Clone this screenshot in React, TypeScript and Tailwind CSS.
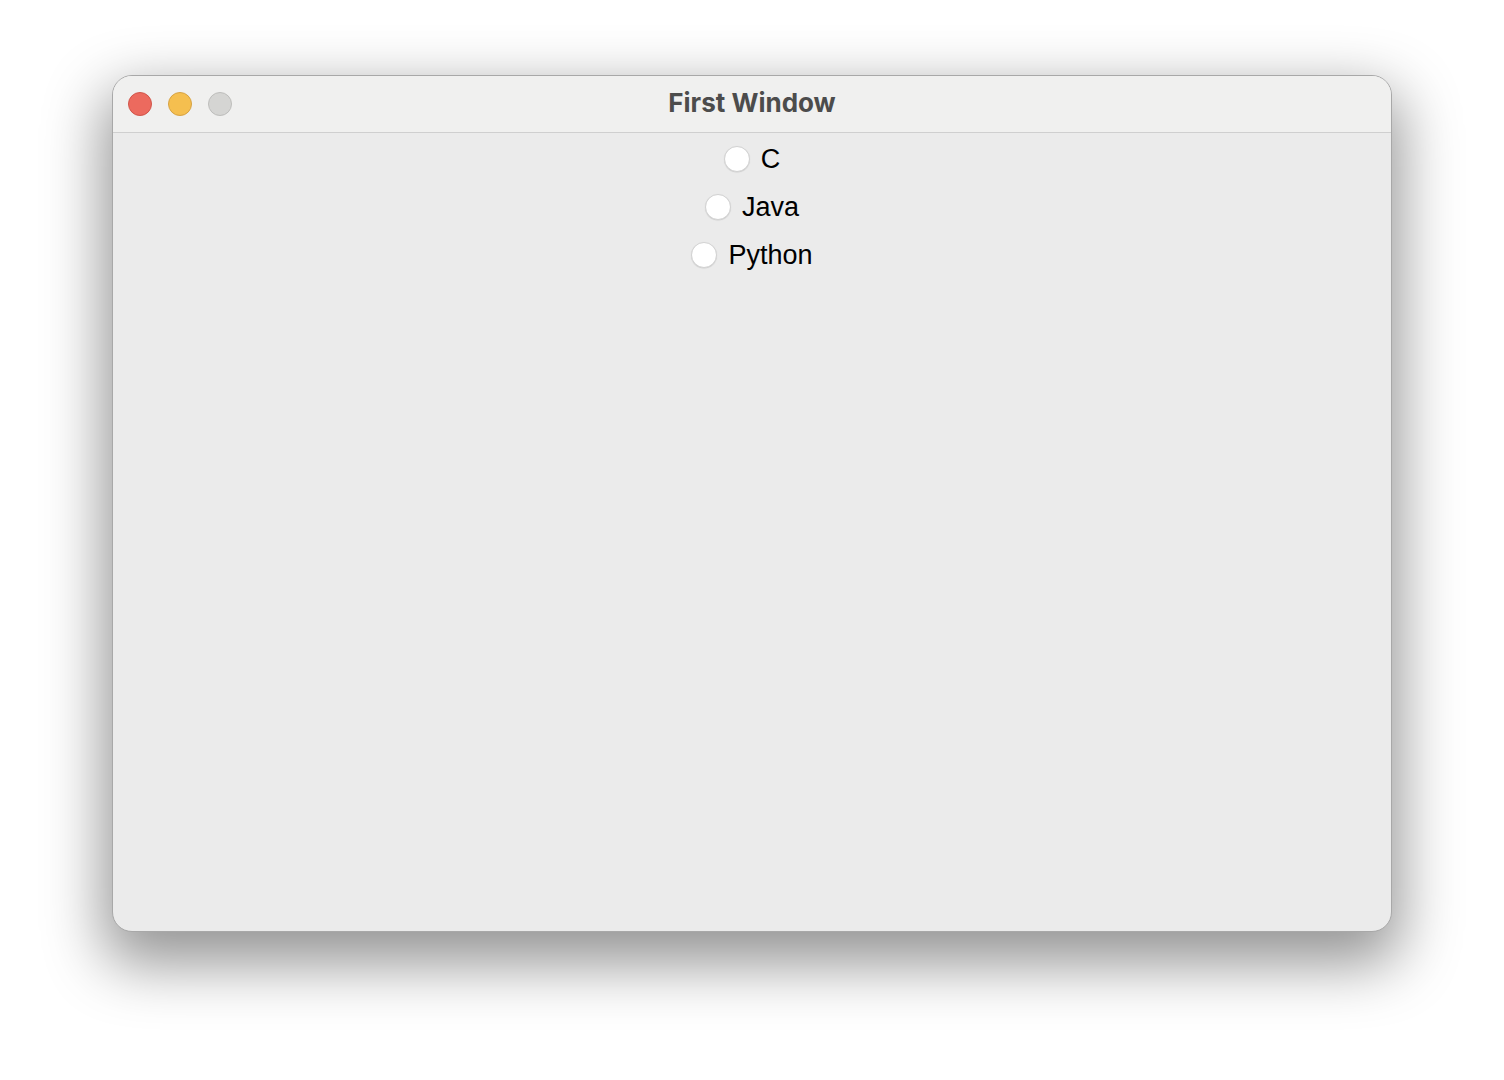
import React from "react";

type Lang = { label: string };

const langs: Lang[] = [{ label: "C" }, { label: "Java" }, { label: "Python" }];

const TrafficLights: React.FC = () => {
  return (
    <div className="flex gap-4 absolute left-[15px] top-[16px]">
      <span className="w-6 h-6 rounded-full bg-[#ec6a5e] border border-[#d0554a]" />
      <span className="w-6 h-6 rounded-full bg-[#f5bf4f] border border-[#d6a243]" />
      <span className="w-6 h-6 rounded-full bg-[#d5d5d3] border border-[#bdbdbb]" />
    </div>
  );
};

const RadioRow: React.FC<Lang> = (props) => {
  return (
    <div className="flex items-center h-12 gap-[11px]">
      <span className="w-[26px] h-[26px] rounded-full bg-white border border-[#d2d2d2] shadow-[0_0.5px_1px_rgba(0,0,0,0.12)]" />
      <span className="text-[27px] text-black leading-none">{props.label}</span>
    </div>
  );
};

const App: React.FC = () => {
  return (
    <div
      className="w-[1504px] h-[1080px] bg-white flex pt-[75px] pl-[112px]"
      style={{ fontFamily: '"Liberation Sans", Arial, sans-serif' }}
    >
      <div className="w-[1280px] h-[857px] rounded-[20px] bg-[#ebebeb] border border-[#a8a8a8] shadow-[0_24px_60px_8px_rgba(0,0,0,0.42)] overflow-hidden flex flex-col">
        <div className="relative h-[57px] bg-[#f0f0ef] border-b border-[#cfcfcf] flex items-center justify-center shrink-0">
          <TrafficLights />
          <span
            className="text-[26px] font-bold text-[#4c4c4c] pb-[4px]"
            style={{ fontFamily: 'Inter, "Liberation Sans", sans-serif' }}
          >
            First Window
          </span>
        </div>
        <div className="flex flex-col items-center pt-[2px]">
          {langs.map((l) => (
            <RadioRow key={l.label} label={l.label} />
          ))}
        </div>
      </div>
    </div>
  );
};

export default App;
